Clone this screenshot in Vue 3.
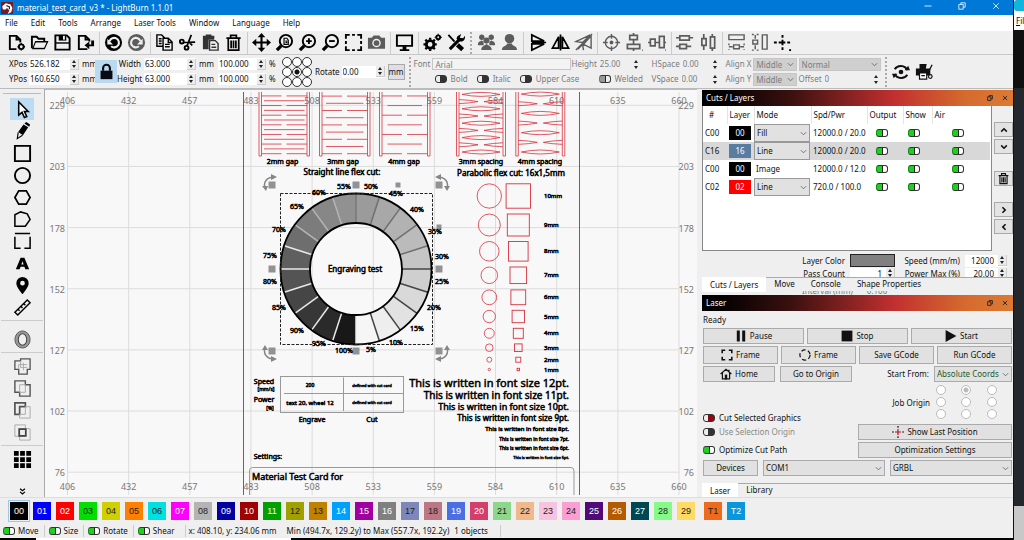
<script setup>
const K = 'fill="currentColor" stroke="none"'
const icons = {
  newFile: '<path d="M10 17H3V3h7l4 4v3M10 3v4h4"/><circle cx="15" cy="14.500" r="2.500"/><path stroke-width="1.500" d="M15 10.500v1.200M15 17.300v1.200M11 14.500h1.200M17.800 14.500H19"/>',
  open: `<path d="M2 16V4h5l2 2h6v3"/><path ${K} d="M2 17 5.500 8.500H19.500L15.500 17z"/><path stroke="#efefef" stroke-width="1.200" d="M6.500 10.500h10l-2 4.500H4.800z" fill="#efefef"/>`,
  save: `<path d="M2.500 2.500h12l3 3v12h-15z"/><path ${K} d="M6 2h8v6H6z"/><path fill="#efefef" stroke="none" d="M10.500 3h2v4h-2z"/><path stroke-width="1.500" d="M3 10.500h14"/>`,
  import: `<path d="M12 17H3V3h7l4 4v2M10 3v4h4"/><path ${K} d="M9 13l5-4v3h2V8h3v6h-5v3z"/>`,
  undo: `<circle ${K} cx="10" cy="10" r="9"/><path stroke="#efefef" stroke-width="2.200" d="M6 8.500a5 5 0 1 1 1.500 5.500"/><path fill="#efefef" stroke="none" d="M3.500 6v6h6z"/>`,
  redo: `<circle ${K} cx="10" cy="10" r="9"/><path stroke="#efefef" stroke-width="2.200" d="M14 8.500a5 5 0 1 0-1.500 5.500"/><path fill="#efefef" stroke="none" d="M16.500 6v6h-6z"/>`,
  copy: '<path stroke-width="1.500" d="M8 14H2V2h5l3 3M4 6h3M4 8.500h3M4 11h3M8.500 5.500h5.500l4 4v8.500H8.500zM14 6v4h4M10.500 12h5M10.500 14.500h5"/>',
  cut: '<circle cx="4" cy="9" r="2"/><circle cx="9" cy="15.500" r="2"/><path stroke-width="1.800" d="M6 10l12-.5M9.500 13.500 14 2M11 9l4 4"/>',
  paste: `<path ${K} d="M2 3h3V1.500h6V3h3v4H8v10H2z"/><path fill="#efefef" stroke-width="1.500" d="M9 8h6l3 3v7H9zM11 12h4M11 15h5"/>`,
  trash: '<path stroke-width="1.800" d="M2.500 5.500h15M7 5V2.500h6V5M4.500 6v12h11V6M7.500 8v8M10 8v8M12.500 8v8"/>',
  move: `<path stroke-width="2.200" d="M10 3v14M3 10h14"/><path ${K} d="M10 0l4 4.500H6zM10 20l4-4.500H6zM0 10l4.500-4v8zM20 10l-4.500-4v8z"/>`,
  zoomPage: '<circle cx="11.500" cy="8.500" r="6.500"/><path stroke-width="3.500" d="M6.500 13.500 2 18"/><path stroke-width="1.200" d="M9.500 5.500h3l1.500 2V12H9.500zM11 8.500h2M11 10h2"/>',
  zoomIn: '<circle cx="11.500" cy="8.500" r="6.500"/><path stroke-width="3.500" d="M6.500 13.500 2 18"/><path d="M11.500 5.500v6M8.500 8.500h6"/>',
  zoomOut: '<circle cx="11.500" cy="8.500" r="6.500"/><path stroke-width="3.500" d="M6.500 13.500 2 18"/><path d="M8.500 8.500h6"/>',
  marquee: '<path d="M2 6V2h4M14 2h4v4M18 14v4h-4M6 18H2v-4M8.500 2h3M8.500 18h3M2 8.500v3M18 8.500v3"/>',
  camera: `<path ${K} d="M1 5h4l2-2.500h6L15 5h4v11.500H1z"/><circle fill="#efefef" stroke="none" cx="10" cy="10.500" r="4.500"/><circle ${K} cx="10" cy="10.500" r="3"/>`,
  monitor: `<path d="M2 2.500h16v11H2z"/><path ${K} d="M8 14h4v3h3v2H5v-2h3z"/>`,
  gears: '<circle cx="7.500" cy="12" r="4" stroke-width="3"/><path stroke-width="2.500" d="M7.500 5v2M7.500 17v2M.5 12h2M12.500 12h2M2.500 7l1.500 1.500M11 15.500l1.500 1.500M12.500 7 11 8.500M2.500 17 4 15.500"/><circle cx="16" cy="4.500" r="2"/><path stroke-width="1.300" d="M16 .8v1M16 7.200v1M12.300 4.500h1M18.700 4.500h1"/>',
  tools: `<path stroke-width="3.200" d="M4 17 14 7"/><path ${K} d="M12 3.500 16 1l-1.500 4 3.500.5L20 3c.5 4-2 6.500-6 6L11 6z"/><path stroke-width="2" d="M2.500 2 9 9"/><path stroke-width="4.500" d="M12 12.500l5.500 5"/>`,
  group: `<g ${K}><circle cx="5" cy="4.500" r="2.800"/><circle cx="15" cy="4.500" r="2.800"/><path d="M1 12c0-4 3-3 4-4.500C6 9 7 9 7 9v4H1zM19 12c0-4-3-3-4-4.500C14 9 13 9 13 9v4h6z"/><circle cx="10" cy="8" r="3.200"/><path d="M4.500 18c0-5 4-4.500 5.500-6.500 1.500 2 5.500 1.500 5.500 6.500z"/></g>`,
  user: `<g ${K}><circle cx="10" cy="6" r="5"/><path d="M2 18c0-5 5-3.500 5.500-7h5c.5 3.500 5.500 2 5.500 7z"/></g>`,
  flipV: '<path stroke-width="1.800" d="M4 2v6.500h13zM4 18v-6.500h13zM4 10h15" stroke-linejoin="miter"/>',
  flipH: '<path stroke-width="1.800" d="M1.500 16H8V4zM18.500 16H12V4zM10 1.500v17"/>',
  mirror: '<path stroke-width="1.500" d="M2 9l15-7-8 8zM10 12l8-9v13zM2 18 19 1M4 17l5-5 1 6"/>',
  target: `<circle stroke-width="1.500" cx="10" cy="10" r="6.500"/><circle ${K} cx="10" cy="10" r="2"/><path stroke-width="1.500" d="M10 1v5M10 14v5M1 10h5M14 10h5"/>`,
  alignV: '<path stroke-width="1.800" d="M5 2.500h8v4.500H5zM2.500 12h13v4.500h-13zM9 7v5M9 0v2M9 17v2"/><path stroke-width="1.500" d="M18 18h1"/>',
  alignH: '<path stroke-width="1.800" d="M2.500 6.500h5v7h-5zM12 3.500h5v12h-5zM0 10h2M8 10h4M17 10h2"/><path stroke-width="1.500" d="M18 18h1"/>',
  distV: '<path stroke-width="1.800" d="M4 3h10v4.500H4zM4 12h7v4.500H4zM0 5h4M14 5h4M0 14h4M11 14h5"/>',
  distH: '<path stroke-width="1.800" d="M3 6h4.500v7H3zM12 4h4.500v12H12zM5 1v5M5 13v5M14 1v3M14 16v3"/>',
  sameW: '<path stroke-width="1.500" d="M2 2h16v5H2zM7 12.500h6v4H7zM2 14.500h4M14 14.500h4M2 11v2M18 11v2M2 17v1M18 17v1"/>',
  sameH: '<path stroke-width="1.500" d="M13 2h5v15h-5zM3 7.500h5v4H3zM5.500 2v4M5.500 13v4M2 1.500h2M7 1.500h2M2 18h2M7 18h2"/>',
  cross: '<path d="M10 2v3M10 7v6M10 15v3M1 10h3M6 10h7M15 10h3"/><path d="M17 18h2"/>',
  pointer: '<path fill="#fff" stroke-width="1.600" d="M6 2v14l3.500-3 2.500 5.500 2.500-1-2.500-5.500h4z"/>',
  pencil: `<path ${K} d="M5.500 10.500 11 2.500l5 3-5.500 8.500zM12 1.500l2-1.500 4 2.500-1 2.500z"/><path stroke-width="1.200" d="M5.500 11l-1 6.500 5.500-3.500"/>`,
  rect: '<path d="M2 2h16v16H2z"/>',
  circle: '<circle cx="10" cy="10" r="8"/>',
  hexagon: '<path stroke-width="1.800" d="M2 10l4-7h8l4 7-4 7H6z"/>',
  shape: '<path stroke-width="1.600" d="M2 17V5l6-3 7 2 3 6-5 7z"/>',
  openRect: '<path stroke-width="1.600" d="M2 1.500h16M2 5v12h6M12 17h6V5"/>',
  textA: `<path ${K} fill-rule="evenodd" d="M8 4h4l5 12h-4l-1-2.500H8L7 16H3zM10 7.500l-1.200 3.500h2.400z"/>`,
  pin: `<path ${K} fill-rule="evenodd" d="M10 1a6.500 6.500 0 0 1 6.500 6.500C16.500 12 10 19 10 19S3.500 12 3.500 7.500A6.500 6.500 0 0 1 10 1zm0 4a2.500 2.500 0 1 0 0 5 2.500 2.500 0 0 0 0-5z"/>`,
  ruler: '<path stroke-width="1.500" d="M2 15 15 2l3 3L5 18zM5.500 12l1.500 1.500M8.500 9l1.500 1.500M11.500 6 13 7.500"/>',
  offset: '<ellipse cx="10" cy="10" rx="6.500" ry="7.500" stroke="#999" stroke-width="3"/><ellipse cx="10" cy="10" rx="4.500" ry="6" stroke="#444" stroke-width="1.200"/><ellipse cx="10" cy="10" rx="8" ry="9" stroke="#555" stroke-width="1"/>',
  weld: '<path stroke-width="1.400" stroke="#555" d="M2 4h6V2h10v11h-3v5H6v-5H2z"/><path stroke="#aaa" stroke-width="1" d="M6 13V8h9M8 4v7h7M11 6v8"/>',
  union: '<path stroke-width="1.500" stroke="#555" d="M2 2h11v4h5v12H7v-4H2z"/><path stroke="#aaa" stroke-width="1" d="M7 14V6h6v8z"/>',
  subtract: '<path stroke-width="1.800" stroke="#555" d="M2 2h11v4H7v8H2z"/><path stroke="#aaa" stroke-width="1" d="M7 14v4h11V6h-5v8H7"/>',
  intersect: '<path stroke="#aaa" stroke-width="1" d="M2 2h11v12H2zM7 6h11v12H7z"/><path stroke="#444" stroke-width="1.800" d="M6.500 6.500h7v7h-7z"/>',
  grid: `<path ${K} d="M1 1h5v5H1zM7.500 1h5v5h-5zM14 1h5v5h-5zM1 7.500h5v5H1zM7.500 7.500h5v5h-5zM14 7.500h5v5h-5zM1 14h5v5H1zM7.500 14h5v5h-5zM14 14h5v5h-5z"/>`,
  lock: `<path ${K} d="M3 9h14v10H3z"/><path stroke-width="2.500" d="M6 9V6a4 4 0 0 1 8 0v3"/>`,
  refresh: `<path stroke-width="2.200" d="M3 7a8 8 0 0 1 14 1M17 13a8 8 0 0 1-14-1"/><path ${K} d="M14 8h6l-2-5zM6 12H0l2 5z"/><circle ${K} cx="10" cy="10" r="2.600"/>`,
  printer: `<path ${K} d="M5 1h8l-1 5h5v8H1V6h4z"/><path fill="#fff" stroke-width="1.300" d="M5 11h8v7H5zM7 14h4"/><path stroke-width="1.500" d="M19 2l-5 10"/><circle fill="#efefef" stroke-width="1.300" cx="17" cy="15" r="2"/>`,
  pause: `<path ${K} d="M3 1h5v18H3zM12 1h5v18h-5z"/>`,
  stop: `<path ${K} d="M1 1h18v18H1z"/>`,
  play: `<path ${K} d="M1 0l18 10L1 20z"/>`,
  frame: '<path stroke-width="2.600" d="M2 7V2h5M13 2h5v5M18 13v5h-5M7 18H2v-5"/>',
  round: '<circle cx="10" cy="10" r="8.500" stroke-dasharray="7 4"/>',
  home: `<path d="M1 10l9-8 9 8M4 8v10h12V8M15 3v4"/><path ${K} d="M8 11h4v8H8z"/>`,
  redCross: '<path d="M10 5v10M5 10h10" stroke="#c01020"/><path d="M10 0v3M10 17v3M0 10h3M17 10h3"/>',
  up: '<path stroke-width="4" d="M3 14l7-7 7 7"/>',
  down: '<path stroke-width="4" d="M3 6l7 7 7-7"/>',
  right: '<path stroke-width="4" d="M6 3l7 7-7 7"/>',
  left: '<path stroke-width="4" d="M14 3l-7 7 7 7"/>',
  restore: '<path d="M2 6h11v12H2zM7 6V2h11v11h-5"/>',
  close: '<path d="M3 3l14 14M17 3 3 17"/>',
  min: '<path d="M1 10h18"/>',
  more: '<path stroke-width="3.500" d="M3 2l7 6 7-6M3 11l7 6 7-6"/>'
}

const menus = ['File', 'Edit', 'Tools', 'Arrange', 'Laser Tools', 'Window', 'Language', 'Help']
const toolGroups = [
  ['newFile', 'open', 'save', 'import'],
  ['undo', 'redo'],
  ['copy', 'cut', 'paste', 'trash'],
  ['move', 'zoomPage', 'zoomIn', 'zoomOut', 'marquee', 'camera'],
  ['monitor'],
  ['gears', 'tools'],
  ['group', 'user'],
  ['flipV', 'flipH', 'mirror'],
  ['target', 'alignV', 'alignH'],
  ['distV', 'distH'],
  ['sameW', 'sameH', 'cross']
]
const greyTools = ['redo', 'camera', 'group', 'user', 'mirror', 'target', 'alignV', 'alignH', 'distV', 'distH', 'sameW', 'sameH']
const sideGroups = [
  ['pointer', 'pencil', 'rect', 'circle', 'hexagon', 'shape', 'openRect', 'textA', 'pin', 'ruler'],
  ['offset'],
  ['weld', 'union', 'subtract', 'intersect'],
  ['grid']
]

const layers = [
  { id: 'C00', no: '00', bg: '#000', mode: 'Fill', pwr: '12000.0 / 20.0' },
  { id: 'C16', no: '16', bg: '#5a7ca0', mode: 'Line', pwr: '12000.0 / 20.0', active: true },
  { id: 'C00', no: '00', bg: '#000', mode: 'Image', pwr: '12000.0 / 12.0', plain: true },
  { id: 'C02', no: '02', bg: '#f00', mode: 'Line', pwr: '720.0 / 100.0' }
]

const swatches = [
  ['#000', '#fff'], ['#00f', '#fff'], ['#f00', '#fff'], ['#00e000', '#222'], ['#d0d000', '#222'],
  ['#ff8000', '#222'], ['#00e0e0', '#222'], ['#f0f', '#fff'], ['#b4b4b4', '#222'], ['#0000a0', '#fff'],
  ['#a00000', '#fff'], ['#00a000', '#fff'], ['#a0a000', '#222'], ['#c08000', '#222'], ['#00a0ff', '#fff'],
  ['#a000a0', '#fff'], ['#808080', '#fff'], ['#7d87b9', '#222'], ['#bb7784', '#222'], ['#4a6fe3', '#fff'],
  ['#d33f6a', '#fff'], ['#8cd78c', '#222'], ['#f0b98d', '#222'], ['#f6c4e1', '#222'], ['#fa9ed4', '#222'],
  ['#500a78', '#fff'], ['#b45a00', '#fff'], ['#004754', '#fff'], ['#86fa88', '#222'], ['#ffdb66', '#222']
].map(([bg, fg], i) => ({ bg, fg, label: String(i).padStart(2, '0') }))

/* work area drawing */
const xLabels = [406, 432, 457, 483, 508, 533, 559, 584, 610, 635, 660].map((t, i) => ({ t, x: 67.5 + i * 61.15 }))
const yLabels = [229, 203, 178, 152, 127, 102, 76].map((t, i) => ({ t, y: 105.3 + i * 61.15 }))

const slots = (x, step, n, inset) => {
  let d = `M${x} 92v64h2.500v-64M${x + 48} 92v64h2.500v-64`
  for (let i = 0; i <= n; i++) {
    const y = 153.7 - i * step
    d += `M${x + 2.5} ${y}h20M${x + 27.5} ${y}h20.500`
    if (i < n) d += `M${x + inset} ${y - step / 2}h${50.5 - 2 * inset}`
  }
  return d
}
const lenses = (x, step, n) => {
  let d = `M${x} 92v64h2.500v-64M${x + 46.5} 92v64h2.500v-64`
  for (let i = 0; i <= n; i++) {
    const y = 152 - i * step
    d += `M${x + 5.5} ${y}q19-4 38 0q-19 4-38 0`
    if (i < n) {
      const h = y - step / 2
      d += `M${x + 2.5} ${h - 2}q11 .4 19 2q-8 1.600-19 2M${x + 46.5} ${h - 2}q-11 .4-19 2q8 1.600 19 2`
    }
  }
  return d
}
const hinges = [slots(259, 9.63, 6, 5), slots(319.5, 14.4, 4, 6.5), slots(379.5, 19.25, 3, 8), lenses(456.5, 14.4, 4), lenses(515.8, 19.3, 3)]

const greys = [246, 238, 226, 217, 207, 197, 187, 178, 168, 155, 145, 135, 124, 110, 95, 84, 70, 55, 42, 24]
const polar = (r, deg) => {
  const a = deg * Math.PI / 180
  return [356 + r * Math.cos(a), 269 + r * Math.sin(a)]
}
const sectors = greys.map((g, i) => {
  const a = 90 - i * 18
  const [x1, y1] = polar(75.5, a), [x2, y2] = polar(75.5, a - 18)
  const [x3, y3] = polar(46, a - 18), [x4, y4] = polar(46, a)
  const spoke = i === 0 ? '#eee' : i === 10 ? '#777' : i < 10 ? (i < 6 ? '#444' : '#707070') : (i < 14 ? '#b4b4b4' : '#e8e8e8')
  return { fill: `rgb(${g},${g},${g})`, d: `M${x1} ${y1}A75.500 75.500 0 0 0 ${x2} ${y2}L${x3} ${y3}A46 46 0 0 1 ${x4} ${y4}z`, spoke, line: `M${x1} ${y1}L${x4} ${y4}` }
})
const percents = [
  [5, 371, 350], [10, 396, 343], [15, 417, 329], [20, 434, 308], [25, 442, 282], [30, 442, 257], [35, 435, 232],
  [40, 417, 210], [45, 396, 194], [50, 371, 187], [55, 344, 187], [60, 319, 193], [65, 297, 207], [70, 279, 230],
  [75, 270, 256], [80, 270, 282], [85, 279, 308], [90, 297, 331], [95, 319, 344], [100, 344, 351]
]
const handles = [[272, 185, 7], [356, 185, 7], [398, 185, 5], [439, 185, 7], [439, 227, 5], [439, 269, 7], [439, 351, 7], [356, 351, 7], [272, 351, 7], [272, 269, 7]]
const sizes = [
  ['10mm', 196, 12.2], ['9mm', 225, 11], ['8mm', 251.3, 9.8], ['7mm', 275.3, 8.3], ['6mm', 297.3, 7.4],
  ['5mm', 316.5, 6.2], ['4mm', 333.3, 5], ['3mm', 347.7, 3.8], ['2mm', 359.7, 2.5], ['1mm', 369.5, 1.2]
]
const samples = [[12, 387, 11], [11, 399, 10], [10, 410, 9], [9, 421, 8], [8, 431, 6], [7, 441, 5], [6, 450, 5], [5, 459, 4]]
const notes = [
  ['2mm gap', 282.5, 164, 7], ['3mm gap', 343, 164, 7], ['4mm gap', 404, 164, 7],
  ['3mm spacing', 481, 164, 7], ['4mm spacing', 540, 164, 7],
  ['Straight line flex cut:', 342, 175, 8], ['Parabolic flex cut: 16x1,5mm', 511, 176, 8],
  ['Engraving test', 355, 272, 8],
  ['200', 310, 387, 5], ['defined with cut card', 372, 387, 4], ['text 20, wheel 12', 310, 405, 6], ['defined with cut card', 372, 404, 4],
  ['Engrave', 312, 422, 7], ['Cut', 372, 422, 7], ['Settings:', 268, 459, 7],
  ['Speed', 264, 384, 7], ['[mm/s]', 266, 391, 5], ['Power', 264, 402, 7], ['[%]', 270, 410, 5]
]
</script>

<template>
  <div class="desktop">
    <div class="window">
      <header class="title">
        <svg class="logo" viewBox="0 0 20 20"><rect width="20" height="20" fill="#7b1a20" /><path d="M2 7 8 2l8 2 3 6-2 7-6 3 3-6-4-4-3 3-4-1z" fill="#fff" /><path d="M9 6l5 2v4" stroke="#222" stroke-width="2" fill="none" /></svg>
        <span>material_test_card_v3 * - LightBurn 1.1.01</span>
        <div class="sysbtns">
          <button v-for="n in ['min', 'restore', 'close']" :key="n" :aria-label="n"><svg viewBox="0 0 20 20" v-html="icons[n]" /></button>
        </div>
      </header>

      <nav class="menu"><button v-for="m in menus" :key="m">{{ m }}</button></nav>

      <div class="tools">
        <div v-for="(g, i) in toolGroups" :key="i" class="group" :class="{ grip: i === 6 }">
          <button v-for="n in g" :key="n" :aria-label="n" :class="{ grey: greyTools.includes(n), dark: n === 'paste' }"><svg viewBox="0 0 20 20" v-html="icons[n]" /></button>
        </div>
      </div>

      <div class="props">
        <div class="pgrid pos">
          <label for="xp">XPos</label><span class="num"><input id="xp" value="526.182"><i /></span><span>mm</span>
          <label for="yp">YPos</label><span class="num"><input id="yp" value="160.650"><i /></span><span>mm</span>
        </div>
        <button class="lock" aria-label="Lock"><svg viewBox="0 0 20 20" v-html="icons.lock" /></button>
        <div class="pgrid dim">
          <label for="w">Width</label><span class="num"><input id="w" value="63.000"><i /></span><span>mm</span><span class="num"><input aria-label="Width %" value="100.000"><i /></span><span>%</span>
          <label for="h">Height</label><span class="num"><input id="h" value="63.000"><i /></span><span>mm</span><span class="num"><input aria-label="Height %" value="100.000"><i /></span><span>%</span>
        </div>
        <div class="anchors"><input v-for="n in 9" :key="n" type="radio" name="anchor" :aria-label="'Anchor ' + n" :checked="n === 5"></div>
        <label for="rot">Rotate</label>
        <span class="num rot"><input id="rot" value="0.00"><i /></span>
        <button class="unit">mm</button>
        <div class="fontbar off">
          <div class="frow">
            <label for="font">Font</label><select id="font" class="fontsel"><option>Arial</option></select>
          </div>
          <div class="frow toggles">
            <label><input type="checkbox" class="tg">Bold</label>
            <label><input type="checkbox" class="tg">Italic</label>
            <label><input type="checkbox" class="tg">Upper Case</label>
          </div>
        </div>
        <div class="fcol heights off">
          <span class="pair"><label for="fh">Height</label><span class="num flat"><input id="fh" value="25.00"><i /></span></span>
          <label class="weld"><input type="checkbox" class="tg grey" checked>Welded</label>
        </div>
        <div class="fcol spaces off">
          <span class="pair"><label for="hs">HSpace</label><span class="num flat"><input id="hs" value="0.00"><i /></span></span>
          <span class="pair"><label for="vs">VSpace</label><span class="num flat"><input id="vs" value="0.00"><i /></span></span>
        </div>
        <div class="fcol aligns off">
          <span class="pair"><label for="ax">Align X</label><select id="ax"><option>Middle</option></select></span>
          <span class="pair"><label for="ay">Align Y</label><select id="ay"><option>Middle</option></select></span>
        </div>
        <div class="fcol modes off">
          <select aria-label="Style"><option>Normal</option></select>
          <span class="pair"><label for="of">Offset</label><span class="num flat"><input id="of" value="0"><i /></span></span>
        </div>
        <div class="output">
          <button aria-label="Refresh"><svg viewBox="0 0 20 20" v-html="icons.refresh" /></button>
          <button aria-label="Print and cut"><svg viewBox="0 0 20 20" v-html="icons.printer" /></button>
        </div>
      </div>

      <main class="main">
        <aside class="side">
          <div v-for="(g, i) in sideGroups" :key="i" class="sgroup">
            <button v-for="n in g" :key="n" :aria-label="n" :class="{ on: n === 'pointer' }"><svg viewBox="0 0 20 20" v-html="icons[n]" /></button>
          </div>
          <button class="more" aria-label="More"><svg viewBox="0 0 20 20" v-html="icons.more" /></button>
        </aside>

        <section class="work">
          <svg class="board" viewBox="45 91 652 404">
            <g stroke="#dcdcdc">
              <line v-for="l in xLabels" :key="l.t" :x1="l.x" :x2="l.x" y1="92" y2="495" />
              <line v-for="l in yLabels" :key="l.t" x1="67" x2="679" :y1="l.y" :y2="l.y" />
            </g>
            <g class="axis">
              <template v-for="l in xLabels" :key="l.t">
                <text :x="l.x" y="104" text-anchor="middle">{{ l.t }}</text>
                <text :x="l.x" y="490" text-anchor="middle">{{ l.t }}</text>
              </template>
              <template v-for="l in yLabels" :key="l.t">
                <text x="65" :y="l.y + 4" text-anchor="end">{{ l.t }}</text>
                <text x="694" :y="l.y + 4" text-anchor="end">{{ l.t }}</text>
              </template>
            </g>
            <rect x="243" y="92" width="1" height="403" fill="#e0303c" />
            <rect x="579" y="92" width="1" height="403" fill="#e0303c" />
            <g fill="none" stroke="#d8303c">
              <path v-for="(d, i) in hinges" :key="i" :d="d" stroke-width=".8" />
              <template v-for="s in sizes" :key="s[0]">
                <circle cx="489.300" :cy="s[1]" :r="s[2]" stroke-width=".8" />
                <rect :x="518.3 - s[2]" :y="s[1] - s[2]" :width="s[2] * 2" :height="s[2] * 2" stroke-width=".9" />
              </template>
            </g>
            <path v-for="(s, i) in sectors" :key="i" :d="s.d" :fill="s.fill" />
            <path v-for="(s, i) in sectors" :key="'l' + i" :d="s.line" :stroke="s.spoke" stroke-width="1.500" />
            <g fill="none" stroke="#000" stroke-width="1.800">
              <circle cx="356" cy="269" r="75.500" />
              <circle cx="356" cy="269" r="46" />
            </g>
            <rect x="280.500" y="193.500" width="152" height="151" fill="none" stroke="#222" stroke-dasharray="3 1.500" />
            <g fill="#929292"><rect v-for="(h, i) in handles" :key="i" :x="h[0] - h[2] / 2" :y="h[1] - h[2] / 2" :width="h[2]" :height="h[2]" /></g>
            <g fill="none" stroke="#868686" stroke-width="1.500">
              <path d="M265 188c-2-6 2-11 9-11M438 177c7 0 11 5 9 11M447 348c2 6-2 11-9 11M274 359c-7 0-11-5-9-11" />
              <path fill="#868686" stroke="none" d="M271 174l6 3-6 3zM262 186h6l-2 5zM441 174l-6 3 6 3zM444 186h6l-3 5zM441 362l-6-3 6-3zM444 350h6l-3-5zM271 362l6-3-6-3zM262 350h6l-3-5z" />
            </g>
            <g fill="none" stroke="#999">
              <rect x="280.500" y="376.500" width="123" height="36" />
              <path d="M284 393.500H403M343.500 377.500V411M249.500 495V471q0-3.500 3-3.500H571q3 0 3 3.500V495" />
            </g>
            <g class="note">
              <text v-for="p in percents" :key="p[0]" :x="p[1]" :y="p[2] + 2" text-anchor="middle" font-size="7">{{ p[0] }}%</text>
              <text v-for="s in sizes" :key="s[0]" x="544" :y="s[1] + 2" font-size="6">{{ s[0] }}</text>
              <text v-for="s in samples" :key="s[0]" x="569" :y="s[1]" text-anchor="end" :font-size="s[2]">This is written in font size {{ s[0] }}pt.</text>
              <text v-for="(n, i) in notes" :key="i" :x="n[1]" :y="n[2]" text-anchor="middle" :font-size="n[3]">{{ n[0] }}</text>
              <text x="252" y="480" font-size="9">Material Test Card for</text>
            </g>
          </svg>
        </section>

        <aside class="dock">
          <h2 class="bar">Cuts / Layers<span><svg viewBox="0 0 20 20" v-html="icons.restore" /><svg viewBox="0 0 20 20" v-html="icons.close" /></span></h2>
          <div class="cuts">
            <div class="tbox">
              <table>
                <colgroup><col class="c1"><col class="c2"><col class="c3"><col class="c4"><col class="c5"><col class="c6"><col></colgroup>
                <thead><tr><th>#</th><th>Layer</th><th>Mode</th><th>Spd/Pwr</th><th>Output</th><th>Show</th><th>Air</th></tr></thead>
                <tbody>
                  <tr v-for="(l, i) in layers" :key="i" :class="{ active: l.active }">
                    <td>{{ l.id }}</td>
                    <td><b :style="{ background: l.bg }">{{ l.no }}</b></td>
                    <td><span v-if="l.plain">{{ l.mode }}</span><select v-else :aria-label="'Mode ' + l.id"><option>{{ l.mode }}</option></select></td>
                    <td>{{ l.pwr }}</td>
                    <td class="t1"><input type="checkbox" class="tg" checked aria-label="Output"></td>
                    <td class="t2"><input type="checkbox" class="tg" checked aria-label="Show"></td>
                    <td class="t3"><input type="checkbox" class="tg" checked aria-label="Air"></td>
                  </tr>
                </tbody>
              </table>
            </div>
            <div class="vbtns">
              <button v-for="n in ['up', 'down', 'trash', 'right', 'left']" :key="n" :class="n" :aria-label="n"><svg viewBox="0 0 20 20" v-html="icons[n]" /></button>
            </div>
          </div>
          <div class="form">
            <span class="lab">Layer Color</span><button class="chip" aria-label="Layer Color" /><label for="sp">Speed (mm/m)</label><span class="num"><input id="sp" value="12000"><i /></span>
            <label for="pc">Pass Count</label><span class="num"><input id="pc" value="1"><i /></span><label for="pm">Power Max (%)</label><span class="num"><input id="pm" value="20.00"><i /></span>
          </div>
          <div class="tabs" role="tablist"><button role="tab" class="on">Cuts / Layers</button><button role="tab">Move</button><button role="tab">Console</button><button role="tab">Shape Properties</button></div>
          <div class="cutoff"><span>Interval (mm)</span><span>0.100</span></div>

          <h2 class="bar">Laser<span><svg viewBox="0 0 20 20" v-html="icons.restore" /><svg viewBox="0 0 20 20" v-html="icons.close" /></span></h2>
          <div class="laser">
            <p>Ready</p>
            <div class="row three">
              <button><svg viewBox="0 0 20 20" v-html="icons.pause" />Pause</button>
              <button><svg viewBox="0 0 20 20" v-html="icons.stop" />Stop</button>
              <button><svg viewBox="0 0 20 20" v-html="icons.play" />Start</button>
            </div>
            <div class="row four">
              <button><svg viewBox="0 0 20 20" v-html="icons.frame" />Frame</button>
              <button><svg viewBox="0 0 20 20" v-html="icons.round" />Frame</button>
              <button>Save GCode</button>
              <button>Run GCode</button>
            </div>
            <div class="row start">
              <button><svg viewBox="0 0 20 20" v-html="icons.home" />Home</button>
              <button>Go to Origin</button>
              <label for="sf">Start From:</label>
              <select id="sf" class="green"><option>Absolute Coords</option></select>
            </div>
            <div class="origin">
              <label class="csg"><input type="checkbox" class="tg red">Cut Selected Graphics</label>
              <span>Job Origin</span>
              <div class="radios"><input v-for="n in 9" :key="n" type="radio" name="origin" :aria-label="'Origin ' + n" :checked="n === 2"></div>
            </div>
            <div class="row two"><label class="dim2"><input type="checkbox" class="tg">Use Selection Origin</label><button><svg viewBox="0 0 20 20" v-html="icons.redCross" />Show Last Position</button></div>
            <div class="row two"><label><input type="checkbox" class="tg" checked>Optimize Cut Path</label><button>Optimization Settings</button></div>
            <div class="row dev"><button>Devices</button><select aria-label="Port"><option>COM1</option></select><select aria-label="Device"><option>GRBL</option></select></div>
          </div>
          <div class="tabs" role="tablist"><button role="tab" class="on">Laser</button><button role="tab">Library</button></div>
        </aside>
      </main>

      <div class="palette">
        <button v-for="(s, i) in swatches" :key="s.label" :class="{ on: i === 0 }" :style="{ background: s.bg, color: s.fg }">{{ s.label }}</button>
        <button class="tool t-one">T1</button><button class="tool t-two">T2</button>
      </div>

      <footer class="status">
        <label v-for="n in ['Move', 'Size', 'Rotate', 'Shear']" :key="n"><input type="checkbox" class="tg" checked>{{ n }}</label>
        <span class="xy">x: 408.10, y: 234.06 mm</span>
        <span>Min (494.7x, 129.2y) to Max (557.7x, 192.2y)</span>
        <span class="obj">1 objects</span>
      </footer>
      <div class="task" />
    </div>

    <div class="behind">
      <div class="b-title"><i /></div>
      <div class="b-menu"><u>F</u>ile</div>
      <div class="b-dark" />
      <div class="b-body" />
      <div class="b-foot" />
    </div>
  </div>
</template>

<style>
body { background: #f0f0f0; }
</style>

<style scoped>
* { box-sizing: border-box; }
.desktop { display: flex; min-height: 100vh; overflow: hidden; font: 8px/12px "Noto Sans", "Open Sans", sans-serif; color: #111; }
.window { flex: 1; min-width: 0; display: flex; flex-direction: column; background: #efefef; }
button, input, select { font: inherit; color: inherit; margin: 0; padding: 0; border: 0; background: none; border-radius: 0; min-width: 0; }
select { appearance: none; }
svg { display: block; fill: none; stroke: currentColor; stroke-width: 2; }
button { display: flex; align-items: center; justify-content: center; white-space: nowrap; }
label, span { white-space: nowrap; }

.title { height: 15px; background: #0078d7; color: #fff; display: flex; align-items: center; gap: 4px; padding-left: 1px; }
.logo { width: 12px; height: 12px; stroke: none; }
.sysbtns { margin-left: auto; display: flex; align-self: flex-start; }
.sysbtns button { width: 34px; height: 11px; }
.sysbtns svg { width: 8px; height: 8px; }
.menu { height: 16px; background: #fff; display: flex; align-items: center; gap: 13px; padding-left: 5px; }

.tools { height: 24px; display: flex; align-items: center; padding-left: 5px; border-bottom: 1px solid #c8c8c8; }
.group { display: flex; }
.group + .group { margin-left: 2px; padding-left: 2px; border-left: 1px solid #ccc; }
.group.grip { margin-left: 3px; padding-left: 3px; border-left: 2px dotted #aaa; }
.group button { width: 23px; height: 22px; color: #000; }
.group button.grey { color: #5c5c5c; }
.group button.dark { color: #333; }
.group svg { width: 19px; height: 19px; }

.props { height: 34px; display: flex; align-items: center; padding-left: 9px; border-bottom: 1px solid #bbb; }
.pgrid { display: grid; grid-auto-rows: 15px; align-items: center; column-gap: 2px; flex: none; }
.pos { grid-template-columns: 18px 50px 14px; column-gap: 2px; }
.pos > span:not(.num) { padding-left: 1px; }
.dim { grid-template-columns: 24px 52px 16px 48px 10px; column-gap: 3px; }
.dim label { text-align: right; }
.num { display: flex; align-items: center; height: 12px; background: #fff; min-width: 0; }
.num input { flex: 1; width: 10px; height: 12px; padding-left: 1px; }
.num i { width: 9px; height: 11px; background: #ececec; border: 1px solid #ccc; border-width: 0 1px 1px 0; position: relative; flex: none; }
.num i::before, .num i::after { content: ""; position: absolute; left: 2px; border: 2px solid transparent; }
.num i::before { top: -1px; border-bottom: 3px solid #222; }
.num i::after { bottom: -1px; border-top: 3px solid #222; }
.num.flat { background: none; }
.num.flat i { background: none; border: 0; }
.lock { width: 22px; height: 23px; background: #b9d9f0; color: #0a0a14; flex: none; }
.lock svg { width: 17px; height: 19px; }
.anchors { display: grid; grid-template-columns: repeat(3, 10px); grid-auto-rows: 10px; margin: 0 3px; flex: none; }
.anchors input, .radios input { appearance: none; width: 10px; height: 10px; border: 1px solid #333; border-radius: 50%; background: #fff; }
.anchors input:checked { background: radial-gradient(#111 0 2px, #fff 3px); }
.rot { width: 43px; margin: 0 3px 0 2px; flex: none; }
.unit { width: 17px; height: 16px; border: 1px solid #aaa; background: #dedee4; flex: none; }
.off { color: #7c7c7c; }
.fontbar { display: flex; flex-direction: column; margin-left: 4px; padding-left: 3px; border-left: 2px dotted #aaa; height: 30px; justify-content: center; gap: 2px; width: 162px; flex: none; }
.frow { display: flex; align-items: center; gap: 2px; height: 13px; }
.fontsel { flex: 1; height: 12px; background: #f0f0f0; }
.toggles { padding-left: 21px; gap: 9px; }
.toggles label, .weld, .status label, .row label, .csg { display: flex; align-items: center; gap: 4px; }
.fcol { display: flex; flex-direction: column; gap: 2px; flex: none; }
.fcol > * { height: 13px; }
.pair { display: flex; align-items: center; gap: 2px; }
.pair .num { flex: 1; }
.heights { width: 69px; margin-left: 1px; }
.weld { padding-left: 27px; }
.spaces { width: 68px; margin-left: 11px; }
.aligns { width: 71px; margin-left: 6px; }
.aligns select { flex: 1; }
.modes { width: 82px; margin-left: 2px; }
select { border: 1px solid #c6c6c6; padding: 0 10px 0 2px; height: 13px; background: #e1e1e1 url("data:image/svg+xml,%3Csvg xmlns='http://www.w3.org/2000/svg' viewBox='0 0 8 8'%3E%3Cpath d='M1 2.500l3 3 3-3' fill='none' stroke='%23666'/%3E%3C/svg%3E") no-repeat right 2px center / 7px 7px; }
.props .fcol select { background-color: #cfcfcf; }
.props .fontsel { background-color: #f3f3f3; }
.output { display: flex; align-items: center; gap: 5px; height: 30px; margin-left: 4px; padding-left: 5px; border-left: 2px dotted #aaa; flex: none; }
.output svg { width: 18px; height: 18px; }

.tg { appearance: none; width: 12px; height: 8px; border: 1px solid #333; border-radius: 3px; background: linear-gradient(90deg, #eee 0 4px, #333 4px); flex: none; display: block; }
.tg:checked { border-left-color: #138a13; background: linear-gradient(90deg, #1fd11f 0 5px, #222 5px 6px, #fff 6px); }
.tg.grey:checked { border-left-color: #777; background: linear-gradient(90deg, #999 0 5px, #222 5px 6px, #eee 6px); }
.tg.red { background: linear-gradient(90deg, #eee 0 4px, #8c0a14 4px); }

.main { flex: 1; display: flex; min-height: 408px; }
.side { width: 45px; border-right: 1px solid #aaa; display: flex; flex-direction: column; align-items: center; padding-top: 9px; flex: none; background: linear-gradient(#bbb, #bbb) no-repeat 3px 4px / 38px 1px; }
.sgroup { width: 42px; display: flex; flex-direction: column; align-items: center; }
.sgroup + .sgroup { border-top: 1px solid #ccc; margin-top: 2px; padding-top: 2px; }
.sgroup:nth-child(2) { margin-top: 2px; padding-top: 7px; }
.sgroup button { width: 24px; height: 22px; color: #000; }
.sgroup button.on { background: #bcdcf4; }
.sgroup svg { width: 19px; height: 19px; }
.more { margin-top: auto; margin-bottom: 2px; color: #000; }
.more svg { width: 7px; height: 7px; }
.work { flex: 1; min-width: 0; padding-top: 1px; background: #f8f8f8; border-top: 1px solid #bbb; }
.board { width: 100%; stroke: none; stroke-width: 1; }
.axis { font-size: 9px; fill: #777; }
.note { fill: #000; stroke: #000; stroke-width: .5px; }

.dock { width: 311px; flex: none; margin-left: 5px; padding-top: 1px; display: flex; flex-direction: column; }
.bar { margin: 0; font: inherit; color: #fff; height: 16px; display: flex; align-items: center; padding: 0 5px 0 4px; background: linear-gradient(90deg, #000 5%, #38100f 28%, #c23030 62%, #d56b2e 85%, #dc7a35); flex: none; }
.bar span { margin-left: auto; display: flex; gap: 9px; color: #222; }
.bar svg { width: 6px; height: 6px; stroke-width: 3; }
.cuts { display: flex; gap: 2px; height: 145px; flex: none; }
.tbox { flex: 1; background: #fff; border: 1px solid #888; border-top: 0; padding-right: 1px; }
table { width: 100%; border-collapse: collapse; table-layout: fixed; }
.c1 { width: 24px; } .c2 { width: 27px; } .c3 { width: 57px; } .c4 { width: 56px; } .c5 { width: 36px; } .c6 { width: 29px; }
th { font-weight: 400; text-align: left; height: 18px; padding: 0 0 0 2px; border-right: 1px solid #e4e4e4; }
th:first-child { padding-left: 6px; }
th:last-child { border: 0; }
td { height: 18px; padding: 0 0 0 2px; white-space: nowrap; }
td:nth-child(3) { padding: 0 1px 0 0; }
td:nth-child(3) span { padding-left: 2px; }
td select { width: 56px; height: 18px; display: block; border-color: #999; }
td b { display: block; font-weight: 400; width: 22px; height: 14px; line-height: 13px; text-align: center; color: #fff; }
tr.active { background: #d8d8d8; }
td.t1 { padding-left: 9px; } td.t2 { padding-left: 5px; } td.t3 { padding-left: 20px; }
.vbtns { width: 19px; display: flex; flex-direction: column; gap: 2px; padding-top: 16px; }
.vbtns button { width: 19px; height: 15px; border: 1px solid #aaa; background: #e3e3e3; }
.vbtns svg { width: 8px; height: 8px; }
.vbtns .trash { margin: 15px 0 14px; }
.vbtns .trash svg { width: 13px; height: 13px; }
.form { height: 26px; overflow: hidden; display: grid; grid-template-columns: 1fr 45px 60px 42px; grid-auto-rows: 13px; column-gap: 5px; align-items: center; padding: 3px 6px 0 0; flex: none; }
.form label, .form .lab { text-align: right; }
.form .num input { text-align: right; padding-right: 4px; }
.chip { height: 13px; background: #808080; border: 1px solid #222; }
.tabs { display: flex; border-top: 1px solid #aaa; height: 14px; flex: none; }
.tabs button { padding: 0 8px; height: 12px; }
.tabs button.on { background: #fff; height: 15px; margin-top: -1px; }
.cutoff { height: 4px; overflow: hidden; display: flex; align-items: flex-end; gap: 14px; padding-left: 100px; line-height: 8px; color: #777; flex: none; }
.laser { display: flex; flex-direction: column; padding: 0 1px; gap: 2px; flex: 1; }
.laser p { margin: 0; height: 15px; line-height: 18px; }
.row { display: grid; gap: 3px; height: 16px; flex: none; }
.row button, .row select { border: 1px solid #aaa; background-color: #e1e1e1; height: 100%; gap: 3px; }
.row svg { width: 12px; height: 12px; }
.three { grid-template-columns: repeat(3, 1fr); }
.four { grid-template-columns: repeat(4, 1fr); height: 18px; }
.start { grid-template-columns: 72px 72px 1fr 78px; gap: 5px; }
.start label { justify-content: flex-end; }
.green { color: #1c5a2c; }
.origin { display: grid; grid-template-columns: 1fr auto 77px; column-gap: 5px; align-items: center; height: 38px; flex: none; }
.csg { align-self: end; line-height: 8px; }
.radios { display: grid; grid-template-columns: repeat(3, 1fr); grid-auto-rows: 12px; justify-items: start; padding-left: 1px; }
.radios input { border-color: #bbb; }
.radios input:checked { background: radial-gradient(#bbb 0 2px, #fff 3px); }
.two { grid-template-columns: 1fr 154px; }
.dim2 { color: #8a8a8a; }
.dev { grid-template-columns: 55px 1fr 1fr; gap: 5px; }

.palette { height: 26px; display: flex; align-items: center; gap: 5px; padding-left: 10px; border-top: 1px solid #ddd; }
.palette button { width: 18px; height: 18px; flex: none; font-family: "Liberation Sans", Arial, sans-serif; font-size: 9px; }
.palette .on { outline: 1px solid #9cc8e8; outline-offset: 1px; }
.palette .t-one { background: #f06a1e; color: #222; margin-left: 4px; }
.palette .t-two { background: #0a96dc; color: #fff; }
.status { height: 15px; display: flex; align-items: center; gap: 5px; padding-left: 3px; }
.status label { gap: 3px; }
.status label + label { border-left: 1px solid #ccc; padding-left: 4px; }
.status .xy { border-left: 1px solid #ccc; padding-left: 2px; margin: 0 5px 0 6px; }
.status .obj { padding-right: 12px; border-right: 1px solid #ccc; }
.task { height: 2px; background: linear-gradient(90deg, #000 36px, #fff 36px 291px, #000 291px); }

.behind { width: 11px; overflow: hidden; display: flex; flex-direction: column; border-left: 1px solid #111; background: #24282c; }
.b-title { height: 15px; background: #fff; }
.b-title i { display: block; width: 12px; height: 11px; background: #10b4dc; border-radius: 3px; }
.b-menu { height: 15px; background: #fff; padding-left: 2px; }
.b-dark { height: 58px; background: #101010; }
.b-body { flex: 1; background: #24282c; }
.b-foot { height: 34px; background: #c8c8c8; }
</style>
